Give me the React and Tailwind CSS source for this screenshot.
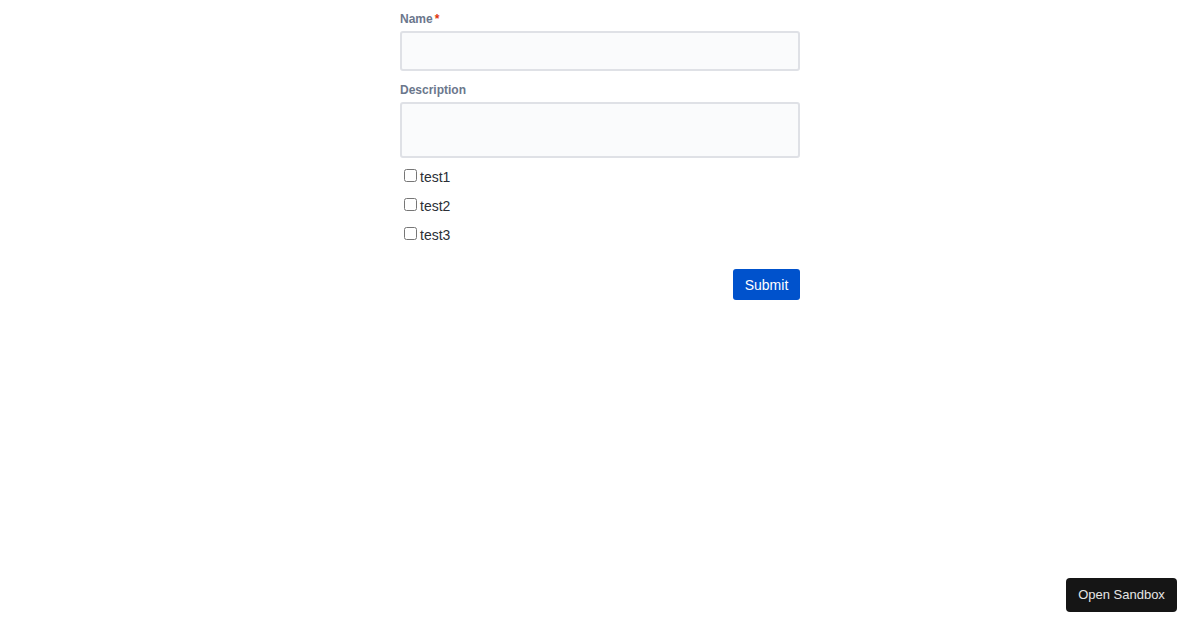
export default function App() {
  const font = { fontFamily: '"Liberation Sans", Arial, sans-serif' };
  return (
    <div className="relative w-[1200px] h-[630px] bg-white" style={font}>
      <div className="w-[400px] mx-auto pt-[11px] flex flex-col">
        <label className="h-[16px] text-[12px] leading-[16px] font-bold text-[#6b778c] flex">
          Name<span className="text-[#de350b] ml-[2px]">*</span>
        </label>
        <input className="mt-[4px] h-[40px] w-full bg-[#fafbfc] border-2 border-[#dfe1e6] rounded-[3px] outline-none" />
        <label className="mt-[11px] h-[16px] text-[12px] leading-[16px] font-bold text-[#6b778c]">
          Description
        </label>
        <textarea className="mt-[4px] h-[56px] w-full bg-[#fafbfc] border-2 border-[#dfe1e6] rounded-[3px] outline-none resize-none" />
        <div className="mt-[5px] flex flex-col">
          {["test1", "test2", "test3"].map((t) => (
            <label key={t} className="h-[29px] flex items-center text-[14px] text-[#2b2f36]">
              <input type="checkbox" className="ml-[4px] mr-[3px] mb-[4px] w-[13px] h-[13px]" />
              {t}
            </label>
          ))}
        </div>
        <div className="mt-[19px] flex justify-end">
          <button className="h-[31px] w-[67px] pt-[2px] bg-[#0052cc] text-white text-[14px] rounded-[3px]">
            Submit
          </button>
        </div>
      </div>
      <button className="absolute left-[1066px] top-[578px] w-[111px] h-[34px] bg-[#151515] text-[#e5e5e5] text-[13px] rounded-[4px]">
        Open Sandbox
      </button>
    </div>
  );
}
